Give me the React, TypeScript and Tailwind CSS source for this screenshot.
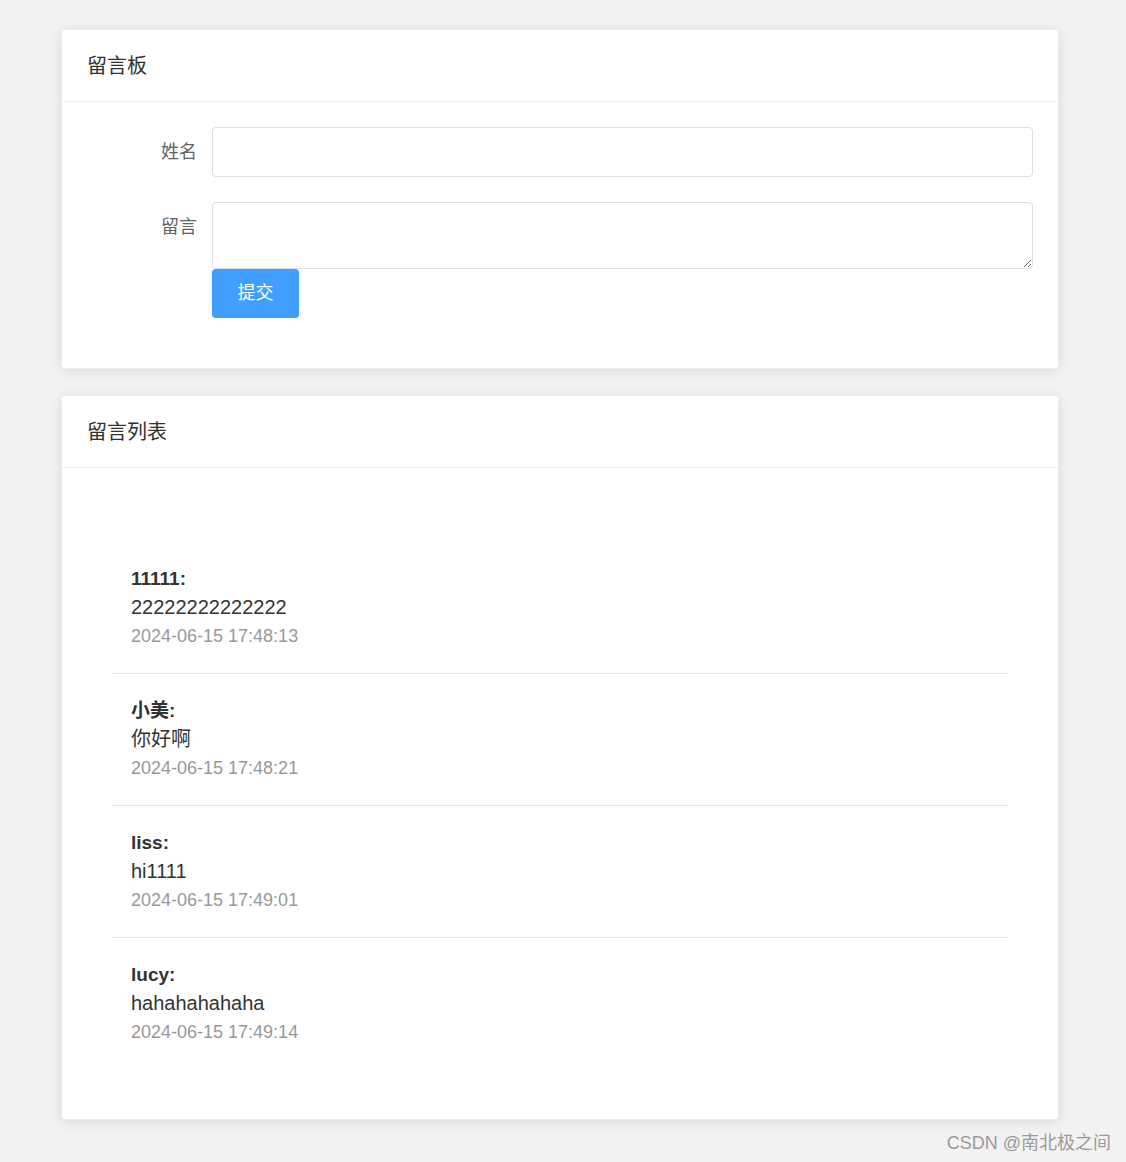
export default function App() {
  const messages = [
    { name: "11111", text: "22222222222222", time: "2024-06-15 17:48:13" },
    { name: "小美", text: "你好啊", time: "2024-06-15 17:48:21" },
    { name: "liss", text: "hi1111", time: "2024-06-15 17:49:01" },
    { name: "lucy", text: "hahahahahaha", time: "2024-06-15 17:49:14" },
  ];
  const font = { fontFamily: '"Liberation Sans", Arial, "Noto Sans CJK SC", sans-serif' };

  return (
    <div className="relative min-h-[1162px] bg-[#f2f2f2] pt-[29px] pb-[43px]" style={font}>
      {/* Form card */}
      <div className="ml-[61px] w-[998px] rounded bg-white border border-[#ebeef5] shadow-[0_2px_12px_0_rgba(0,0,0,0.1)]">
        <div className="h-[72px] flex items-center px-[25px] border-b border-[#ebeef5] text-[20px] text-[#303133]">留言板</div>
        <div className="px-[25px] pt-[25px] pb-[50px]">
          <div className="flex items-center">
            <label className="w-[125px] pr-[15px] text-right text-[18px] text-[#606266]">姓名</label>
            <input className="flex-1 h-[50px] rounded border border-[#dcdfe6] px-4 outline-none" />
          </div>
          <div className="flex mt-[25px]">
            <label className="w-[125px] pr-[15px] pt-[12px] text-right text-[18px] text-[#606266]">留言</label>
            <textarea className="flex-1 h-[67px] rounded border border-[#dcdfe6] px-4 py-2 outline-none block" />
          </div>
          <div className="pl-[125px]">
            <button className="w-[87px] h-[49px] rounded bg-[#409eff] text-white text-[18px]">提交</button>
          </div>
        </div>
      </div>

      {/* List card */}
      <div className="ml-[61px] mt-[26px] w-[998px] rounded bg-white border border-[#ebeef5] shadow-[0_2px_12px_0_rgba(0,0,0,0.1)]">
        <div className="h-[72px] flex items-center px-[25px] border-b border-[#ebeef5] text-[20px] text-[#303133]">留言列表</div>
        <div className="px-[50px] pt-[74px] pb-[50px]">
          {messages.map((m, i) => (
            <div key={i} className={`px-[19px] py-[22px] ${i < messages.length - 1 ? "border-b border-[#e6e6e6]" : ""}`}>
              <div className="text-[19px] font-bold leading-[29px] text-[#333]">{m.name}:</div>
              <div className="text-[20px] leading-[29px] text-[#333]">{m.text}</div>
              <div className="text-[18px] leading-[29px] text-[#999]">{m.time}</div>
            </div>
          ))}
        </div>
      </div>

      <div className="absolute right-[15px] bottom-[6px] text-[18px] text-[#9a9a9a]">CSDN @南北极之间</div>
    </div>
  );
}
